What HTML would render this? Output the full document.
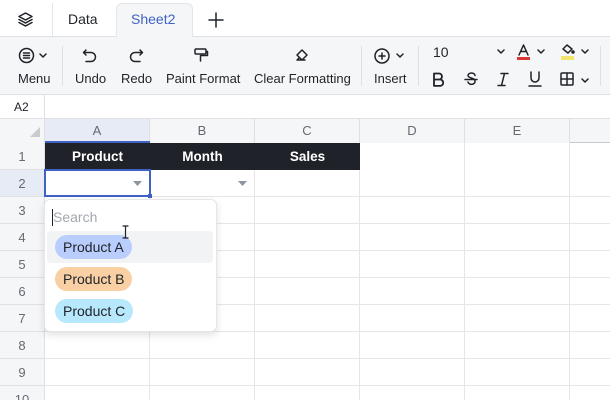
<!DOCTYPE html>
<html><head><style>
*{box-sizing:border-box;margin:0;padding:0}
html,body{width:610px;height:400px;overflow:hidden}
body{background:#fff;font-family:"Liberation Sans",sans-serif;color:#1f2329;position:relative}
.a{position:absolute}
.lbl{font-size:13px;color:#1f2329;text-align:center}
.ch{position:absolute;top:119px;height:24px;font-size:13px;color:#646a73;text-align:center;line-height:24px;border-right:1px solid #dee0e3;background:#f5f6f7}
.rh{position:absolute;left:0;width:45px;height:27px;font-size:13px;color:#646a73;text-align:center;line-height:27px;border-bottom:1px solid #dee0e3;background:#f5f6f7;border-right:1px solid #dee0e3}
.vl{position:absolute;top:143px;bottom:0;width:1px;background:#e5e6e8}
.hl{position:absolute;left:45px;right:0;height:1px;background:#e5e6e8}
.pill{position:absolute;left:55px;height:24px;border-radius:12px;padding:0 8px;font-size:14px;line-height:24px;color:#1f2329}
svg{position:absolute;fill:none;stroke:#1f2329;stroke-width:1.5;stroke-linecap:round;stroke-linejoin:round}
</style></head><body>
<div class="a" style="left:0;top:0;width:610px;height:37px;background:#fff;border-bottom:1px solid #dee0e3"></div>
<svg style="left:17px;top:11px" width="17" height="17" viewBox="0 0 17 17"><path d="M8.5 2 L15 5.5 L8.5 9 L2 5.5Z M2 8.5 L8.5 12 L15 8.5 M2 11.5 L8.5 15 L15 11.5"/></svg>
<div class="a" style="left:52px;top:3px;width:1px;height:33px;background:#e5e6e8"></div>
<div class="a" style="left:68px;top:11px;font-size:14px">Data</div>
<div class="a" style="left:116px;top:3px;width:77px;height:35px;background:#f5f6f7;border:1px solid #e5e6e8;border-bottom:none;border-radius:6px 6px 0 0"></div>
<div class="a" style="left:131px;top:11px;font-size:14px;color:#3f62c4">Sheet2</div>
<svg style="left:208px;top:12px" width="16" height="16" viewBox="0 0 16 16"><path d="M8 1v14M1 8h14"/></svg>
<div class="a" style="left:0;top:37px;width:610px;height:58px;background:#f5f6f7;border-bottom:1px solid #dee0e3"></div>
<svg style="left:18px;top:47px" width="17" height="17" viewBox="0 0 17 17"><circle cx="8.5" cy="8.5" r="7"/><path d="M5.5 6h6M5.5 8.5h6M5.5 11h6"/></svg>
<svg style="left:39px;top:53px" width="8" height="5" viewBox="0 0 8 5"><path d="M1 1l3 3 3-3"/></svg>
<div class="a lbl" style="left:18px;top:71px">Menu</div>
<div class="a" style="left:62px;top:46px;width:1px;height:40px;background:#dee0e3"></div>
<svg style="left:82px;top:48px" width="16" height="16" viewBox="0 0 16 16"><path d="M4 2L1.5 4.5 4 7M2 4.5h7a4.5 4.5 0 010 9H4"/></svg>
<div class="a lbl" style="left:75px;top:71px">Undo</div>
<svg style="left:128px;top:48px" width="16" height="16" viewBox="0 0 16 16"><path d="M12 2l2.5 2.5L12 7M14 4.5H7a4.5 4.5 0 000 9h5"/></svg>
<div class="a lbl" style="left:121px;top:71px">Redo</div>
<svg style="left:193px;top:47px" width="16" height="16" viewBox="0 0 16 16"><rect x="2" y="2" width="11" height="5" rx="1"/><path d="M13 4.5h1.5v4H7.5V14"/></svg>
<div class="a lbl" style="left:166px;top:71px">Paint Format</div>
<svg style="left:293px;top:48px" width="16" height="16" viewBox="0 0 16 16"><path d="M9 2l5 5-5 5-5-5z M6.5 9.5L4 12h8"/></svg>
<div class="a lbl" style="left:254px;top:71px">Clear Formatting</div>
<div class="a" style="left:361px;top:46px;width:1px;height:40px;background:#dee0e3"></div>
<svg style="left:373px;top:47px" width="18" height="18" viewBox="0 0 18 18"><circle cx="9" cy="9" r="7"/><path d="M9 6v6M6 9h6"/></svg>
<svg style="left:396px;top:53px" width="8" height="5" viewBox="0 0 8 5"><path d="M1 1l3 3 3-3"/></svg>
<div class="a lbl" style="left:374px;top:71px">Insert</div>
<div class="a" style="left:418px;top:46px;width:1px;height:40px;background:#dee0e3"></div>
<div class="a" style="left:433px;top:44px;font-size:14px">10</div>
<svg style="left:497px;top:49px" width="8" height="5" viewBox="0 0 8 5"><path d="M1 1l3 3 3-3"/></svg>
<svg style="left:517px;top:44px" width="13" height="12" viewBox="0 0 13 12"><path d="M2 11L6.5 1 11 11M3.8 7.5h5.4"/></svg>
<div class="a" style="left:517px;top:57px;width:13px;height:3px;background:#d83931"></div>
<svg style="left:537px;top:49px" width="8" height="5" viewBox="0 0 8 5"><path d="M1 1l3 3 3-3"/></svg>
<svg style="left:561px;top:43px" width="14" height="12" viewBox="0 0 14 12"><path d="M6 2l5 4-4 4-5-4z"/><circle cx="12" cy="9" r="1" fill="#1f2329"/></svg>
<div class="a" style="left:561px;top:56px;width:13px;height:4px;background:#f2e56b"></div>
<svg style="left:581px;top:49px" width="8" height="5" viewBox="0 0 8 5"><path d="M1 1l3 3 3-3"/></svg>
<div class="a" style="left:600px;top:46px;width:1px;height:40px;background:#dee0e3"></div>
<svg style="left:432px;top:72px" width="13" height="15" viewBox="0 0 13 15"><path d="M2 1.5h5a3 3 0 010 6H2zM2 7.5h6a3.2 3.2 0 010 6.4H2z" stroke-width="1.8"/></svg>
<svg style="left:464px;top:72px" width="14" height="15" viewBox="0 0 14 15"><path d="M11 3.5a3.5 2.5 0 00-7 0c0 3 7 2 7 5.5a3.5 2.8 0 01-7 1M1 7.5h12"/></svg>
<svg style="left:497px;top:72px" width="12" height="15" viewBox="0 0 12 15"><path d="M4 1.5h7M1 13.5h7M7.5 1.5L4.5 13.5"/></svg>
<svg style="left:528px;top:71px" width="14" height="16" viewBox="0 0 14 16"><path d="M3 1v6a4 4 0 008 0V1M1 15h12"/></svg>
<svg style="left:560px;top:72px" width="14" height="14" viewBox="0 0 14 14"><rect x="1" y="1" width="12" height="12" rx="1"/><path d="M7 1v12M1 7h12"/></svg>
<svg style="left:581px;top:78px" width="8" height="5" viewBox="0 0 8 5"><path d="M1 1l3 3 3-3"/></svg>
<div class="a" style="left:0;top:95px;width:610px;height:24px;border-bottom:1px solid #dee0e3"></div>
<div class="a" style="left:14px;top:100px;font-size:12px">A2</div>
<div class="a" style="left:44px;top:95px;width:1px;height:24px;background:#dee0e3"></div>
<div class="a" style="left:0;top:119px;width:610px;height:24px;background:#f5f6f7;border-bottom:1px solid #c8cacd"></div>
<div class="ch" style="left:0;width:45px"></div>
<svg style="left:30px;top:127px" width="11" height="11" viewBox="0 0 11 11"><path d="M10 0V10H0Z" fill="#c8cacd" stroke="none"/></svg>
<div class="ch" style="left:45px;width:105px;background:#e6ebf5">A</div>
<div class="a" style="left:45px;top:141px;width:105px;height:2px;background:#3f62c4"></div>
<div class="ch" style="left:150px;width:105px">B</div>
<div class="ch" style="left:255px;width:105px">C</div>
<div class="ch" style="left:360px;width:105px">D</div>
<div class="ch" style="left:465px;width:105px">E</div>
<div class="vl" style="left:149px"></div><div class="vl" style="left:254px"></div><div class="vl" style="left:359px"></div><div class="vl" style="left:464px"></div><div class="vl" style="left:569px"></div>
<div class="hl" style="top:196px"></div><div class="hl" style="top:223px"></div><div class="hl" style="top:250px"></div><div class="hl" style="top:277px"></div><div class="hl" style="top:304px"></div><div class="hl" style="top:331px"></div><div class="hl" style="top:358px"></div><div class="hl" style="top:385px"></div>
<div class="rh" style="top:143px">1</div>
<div class="rh" style="top:170px;background:#e6ebf5">2</div>
<div class="rh" style="top:197px">3</div>
<div class="rh" style="top:224px">4</div>
<div class="rh" style="top:251px">5</div>
<div class="rh" style="top:278px">6</div>
<div class="rh" style="top:305px">7</div>
<div class="rh" style="top:332px">8</div>
<div class="rh" style="top:359px">9</div>
<div class="rh" style="top:386px">10</div>
<div class="a" style="left:45px;top:143px;width:315px;height:27px;background:#1f2329;color:#fff;font-weight:bold;font-size:13.5px;line-height:27px;display:flex">
<div style="width:105px;text-align:center">Product</div><div style="width:105px;text-align:center">Month</div><div style="width:105px;text-align:center">Sales</div></div>
<div class="a" style="left:44px;top:169px;width:107px;height:28px;border:2px solid #3f62c4"></div>
<div class="a" style="left:148px;top:194px;width:4px;height:4px;background:#3f62c4"></div>
<svg style="left:133px;top:181px" width="9" height="6" viewBox="0 0 9 6"><path d="M0 0h9L4.5 5z" fill="#8f959e" stroke="none"/></svg>
<svg style="left:238px;top:181px" width="9" height="6" viewBox="0 0 9 6"><path d="M0 0h9L4.5 5z" fill="#8f959e" stroke="none"/></svg>
<div class="a" style="left:44px;top:199px;width:173px;height:133px;background:#fff;border:1px solid #e5e6e8;border-radius:6px;box-shadow:0 3px 8px rgba(0,0,0,.12)"></div>
<div class="a" style="left:52px;top:209px;width:1px;height:17px;background:#1f2329"></div>
<div class="a" style="left:53px;top:209px;font-size:14px;color:#a2a7af">Search</div>
<div class="a" style="left:47px;top:231px;width:166px;height:32px;background:#f2f3f5;border-radius:4px"></div>
<div class="pill" style="top:235px;background:#bacefd">Product A</div>
<div class="pill" style="top:267px;background:#f8d0a4">Product B</div>
<div class="pill" style="top:299px;background:#b8e8fb">Product C</div>
<svg style="left:122px;top:225px" width="7" height="14" viewBox="0 0 7 14"><path d="M1 1h5M3.5 1v12M1 13h5" stroke-width="1.2"/></svg>
</body></html>
